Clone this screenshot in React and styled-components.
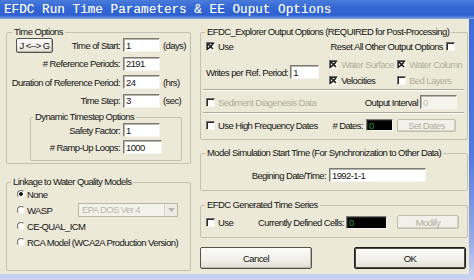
import React from "react";
import styled, { createGlobalStyle } from "styled-components";

const GlobalStyle = createGlobalStyle`
  html, body { margin: 0; padding: 0; background: #fff; }
  body { font-family: "Liberation Sans", Arial, sans-serif; }
  * { box-sizing: border-box; }
`;

const Window = styled.div`
  width: 474px;
  height: 280px;
  display: flex;
  flex-direction: column;
  overflow: hidden;
  background: linear-gradient(180deg, #3a6bd8 0%, #4f7ade 55%, #93a9e8 85%, #cdd4f1 100%);
`;

const TitleBar = styled.div`
  height: 19px;
  flex: none;
  display: flex;
  align-items: center;
  padding-left: 4px;
  background: linear-gradient(180deg, #4b7ddc 0%, #3467d4 40%, #2e60cf 80%, #86a3e4 100%);
  color: #fff;
  font-family: "Liberation Mono", "Courier New", monospace;
  font-size: 12.7px;
  white-space: nowrap;
  text-shadow: 0 0 0.5px rgba(255, 255, 255, 0.5);
`;

const Body = styled.div`
  flex: 1;
  margin: 0 5px 6px 0;
  padding: 7px 1px 0 6px;
  display: flex;
  gap: 9px;
  background: #ece9d8;
  color: #151515;
  font-size: 9.5px;
  letter-spacing: -0.6px;
  white-space: nowrap;
`;

const Column = styled.div`
  width: ${(p) => p.$w}px;
  flex: none;
  display: flex;
  flex-direction: column;
`;

const Group = styled.fieldset`
  margin: ${(p) => p.$mt || 0}px 0 0 ${(p) => p.$ml || 0}px;
  padding: 0;
  min-width: 0;
  width: ${(p) => (p.$w ? `${p.$w}px` : "auto")};
  height: ${(p) => p.$h}px;
  border: 1px solid #c4c1b0;
  border-radius: 2px;
`;

const Legend = styled.legend`
  margin-left: ${(p) => (p.$ml === undefined ? 4 : p.$ml)}px;
  padding: 0 2px;
  line-height: 12px;
  font-size: 9.5px;
`;

const FieldGrid = styled.div`
  display: grid;
  grid-template-columns: ${(p) => p.$label}px 37px auto;
  grid-auto-rows: 14px;
  column-gap: 3px;
  row-gap: ${(p) => p.$gap}px;
  align-items: center;
`;

const Label = styled.div`
  display: flex;
  align-items: center;
  justify-content: ${(p) => (p.$split ? "space-between" : "flex-end")};
  padding-left: ${(p) => (p.$split ? 9 : 0)}px;
  height: 100%;
`;

const Input = styled.input`
  width: ${(p) => p.$w || 37}px;
  height: ${(p) => p.$h || 14}px;
  margin: 0 0 0 ${(p) => p.$ml || 0}px;
  padding: 0 0 0 2px;
  flex: none;
  font: inherit;
  letter-spacing: inherit;
  color: ${(p) => (p.$dark ? "#2f9a2f" : p.disabled ? "#c4c1b0" : "#151515")};
  background: ${(p) => (p.$dark ? "#000" : p.disabled ? "#f4f3ec" : "#fff")};
  border-style: solid;
  border-width: 1px;
  border-color: #7b7b76 #f6f5ee #f6f5ee #7b7b76;
  box-shadow: inset 1px 1px 0 ${(p) => (p.$dark ? "#222" : "#b8b6aa")};
  outline: none;
`;

const Button = styled.div`
  width: ${(p) => p.$w}px;
  height: ${(p) => p.$h}px;
  margin-left: ${(p) => p.$ml || 0}px;
  flex: none;
  display: flex;
  align-items: center;
  justify-content: center;
  border-radius: 2px;
  color: ${(p) => (p.$off ? "#b2af9f" : "#151515")};
  background: ${(p) =>
    p.$off ? "#f2f0e8" : "linear-gradient(180deg, #fbfbf8 0%, #f0efe9 60%, #e2dfd2 100%)"};
  border: 1px solid ${(p) => (p.$off ? "#c2bfaf" : p.$default ? "#1e1e1e" : "#55554f")};
  box-shadow: ${(p) =>
    p.$default
      ? "inset 0 0 0 1px #4a4a46"
      : p.$off
      ? "inset -1px -1px 0 #d6d3c4"
      : "inset -1px -1px 0 #b9b6a8"};
`;

const RadioList = styled.div`
  margin-top: -2px;
  padding: 0 12px 0 10px;
  display: flex;
  flex-direction: column;
`;

const RadioRow = styled.div`
  height: 16px;
  display: flex;
  align-items: center;
  gap: 2px;
`;

const RadioDot = styled.span`
  width: 8px;
  height: 8px;
  flex: none;
  border-radius: 50%;
  border: 1px solid;
  border-color: #6f6f6a #f4f3ee #f4f3ee #6f6f6a;
  background: ${(p) => (p.$on ? "radial-gradient(circle, #1c1c1c 0 1.6px, #fff 2.2px)" : "#fff")};
`;

const Combo = styled.div`
  margin-left: auto;
  width: 100px;
  height: 14px;
  display: flex;
  border: 1px solid #b9b6a6;
  background: #f3f2ec;
  color: #bab7a8;
`;

const ComboText = styled.span`
  flex: 1;
  padding-left: 3px;
  line-height: 12px;
`;

const ComboArrow = styled.span`
  width: 13px;
  display: flex;
  align-items: center;
  justify-content: center;
  border-left: 1px solid #d8d5c8;
  background: #eceae2;
`;

const Row = styled.div`
  height: ${(p) => p.$h || 14}px;
  margin-top: ${(p) => p.$mt || 0}px;
  padding: 0 ${(p) => p.$pr || 0}px 0 5px;
  display: flex;
  align-items: center;
  justify-content: ${(p) => (p.$end ? "flex-end" : "flex-start")};
`;

const Spacer = styled.div`
  flex: 1;
`;

const CheckLabel = styled.label`
  display: flex;
  align-items: center;
  gap: 3px;
  color: ${(p) => (p.$off ? "#b2af9f" : "inherit")};
`;

const Box = styled.span`
  width: 9px;
  height: 9px;
  flex: none;
  display: inline-flex;
  align-items: center;
  justify-content: center;
  background: #fff;
  border-style: solid;
  border-width: 1px;
  border-color: #707070 #f4f3ee #f4f3ee #707070;
  box-shadow: inset 1px 1px 0 #2a2a2a;
`;

const CheckGrid = styled.div`
  margin-left: 10px;
  display: grid;
  grid-template-columns: 68px auto;
  grid-auto-rows: 16px;
  align-items: center;
`;

const Separator = styled.div`
  height: 2px;
  margin: ${(p) => p.$mt || 0}px 3px 0 2px;
  border-top: 1px solid #aca899;
  border-bottom: 1px solid #fff;
`;

const ButtonRow = styled.div`
  margin-top: 9px;
  padding-right: 2px;
  display: flex;
  justify-content: space-between;
`;

const Text = styled.span`
  color: ${(p) => (p.$off ? "#b2af9f" : "inherit")};
`;

function Check({ checked, off, children, before }) {
  const box = (
    <Box>
      {checked && (
        <svg width="7" height="7" viewBox="0 0 7 7">
          <path d="M1 1 L6 6 M6 1 L1 6" stroke="#1a1a1a" strokeWidth="1.7" />
        </svg>
      )}
    </Box>
  );
  return (
    <CheckLabel $off={off}>
      {before && box}
      {children}
      {!before && box}
    </CheckLabel>
  );
}

function Radio({ on, children }) {
  return (
    <RadioRow>
      <RadioDot $on={on} />
      {children}
    </RadioRow>
  );
}

export default function App() {
  return (
    <>
      <GlobalStyle />
      <Window>
        <TitleBar>EFDC Run Time Parameters &amp; EE Ouput Options</TitleBar>
        <Body>
          <Column $w={185}>
            <Group $h={138}>
              <Legend $ml={5}>Time Options</Legend>
              <FieldGrid $label={113} $gap={4.5}>
                <Label $split>
                  <Button $w={37} $h={15}>J &lt;--&gt; G</Button>
                  Time of Start:
                </Label>
                <Input readOnly value="1" />
                <span>(days)</span>
                <Label># Reference Periods:</Label>
                <Input readOnly value="2191" />
                <span />
                <Label>Duration of Reference Period:</Label>
                <Input readOnly value="24" />
                <span>(hrs)</span>
                <Label>Time Step:</Label>
                <Input readOnly value="3" />
                <span>(sec)</span>
              </FieldGrid>
              <Group $h={50} $w={152} $ml={23} $mt={3.5}>
                <Legend $ml={2}>Dynamic Timestep Options</Legend>
                <FieldGrid $label={89} $gap={3}>
                  <Label>Safety Factor:</Label>
                  <Input readOnly value="1" />
                  <span />
                  <Label># Ramp-Up Loops:</Label>
                  <Input readOnly value="1000" $w={39} />
                  <span />
                </FieldGrid>
              </Group>
            </Group>
            <Group $h={95} $mt={12}>
              <Legend>Linkage to Water Quality Models</Legend>
              <RadioList>
                <Radio on>None</Radio>
                <Radio>
                  WASP
                  <Combo>
                    <ComboText>EPA DOS Ver 4</ComboText>
                    <ComboArrow>
                      <svg width="7" height="4" viewBox="0 0 7 4">
                        <path d="M0 0 H7 L3.5 4 Z" fill="#b8b5a6" />
                      </svg>
                    </ComboArrow>
                  </Combo>
                </Radio>
                <Radio>CE-QUAL_ICM</Radio>
                <Radio>RCA Model (WCA2A Production Version)</Radio>
              </RadioList>
            </Group>
          </Column>

          <Column $w={268}>
            <Group $h={114}>
              <Legend>EFDC_Explorer Output Options (REQUIRED for Post-Processing)</Legend>
              <Row $mt={1} $pr={12}>
                <Check checked before>Use</Check>
                <Spacer />
                <Check>Reset All Other Output Options</Check>
              </Row>
              <Row $mt={3} $h={32}>
                <Text>Writes per Ref. Period:</Text>
                <Input readOnly value="1" $w={29} $ml={2} />
                <CheckGrid>
                  <Check checked off before>Water Surface</Check>
                  <Check checked off before>Water Column</Check>
                  <Check checked before>Velocities</Check>
                  <Check off before>Bed Layers</Check>
                </CheckGrid>
              </Row>
              <Separator $mt={1} />
              <Row $mt={4} $pr={10}>
                <Check off before>Sediment Diagenesis Data</Check>
                <Spacer />
                <Text>Output Interval</Text>
                <Input disabled value="0" $ml={2} />
              </Row>
              <Separator $mt={3} />
              <Row $mt={4} $pr={11}>
                <Check before>Use High Frequency Dates</Check>
                <Spacer />
                <Text># Dates:</Text>
                <Input readOnly value="0" $dark $w={27} $h={12} $ml={3} />
                <Button $off $w={59} $h={13} $ml={4}>Set Dates</Button>
              </Row>
            </Group>

            <Group $h={44} $mt={7}>
              <Legend>Model Simulation Start Time (For Synchronization to Other Data)</Legend>
              <Row $mt={9} $pr={41} $end>
                <Text>Begining Date/Time:</Text>
                <Input readOnly value="1992-1-1" $w={97} $ml={3} />
              </Row>
            </Group>

            <Group $h={39} $mt={8}>
              <Legend>EFDC Generated Time Series</Legend>
              <Row $mt={4} $pr={8}>
                <Check before>Use</Check>
                <Spacer />
                <Text>Currently Defined Cells:</Text>
                <Input readOnly value="0" $dark $w={41} $h={13} $ml={2} />
                <Button $off $w={62} $h={14} $ml={10}>Modify</Button>
              </Row>
            </Group>

            <ButtonRow>
              <Button $w={112} $h={22}>Cancel</Button>
              <Button $w={112} $h={22} $default>OK</Button>
            </ButtonRow>
          </Column>
        </Body>
      </Window>
    </>
  );
}
